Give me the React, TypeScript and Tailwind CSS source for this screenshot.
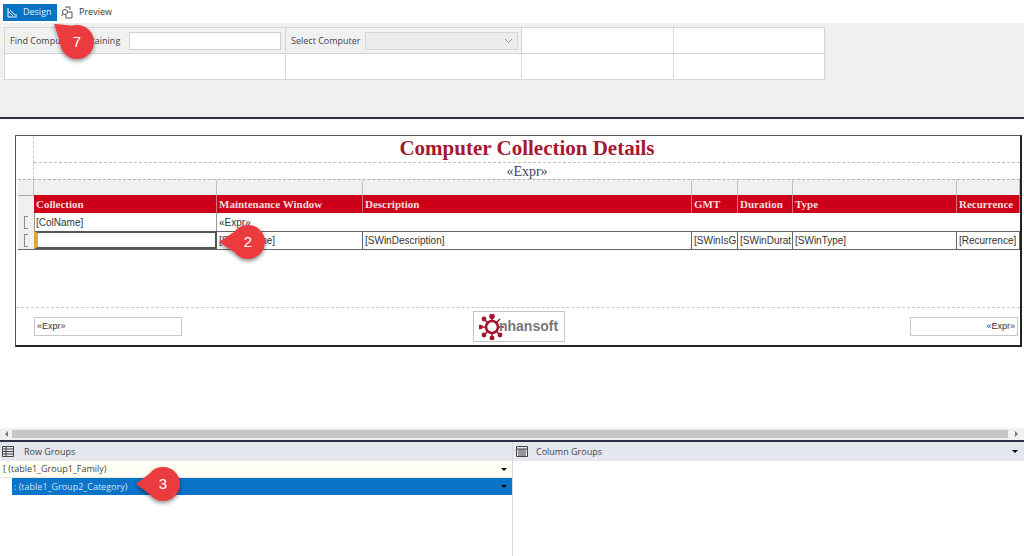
const ui = "font-['Open_Sans',sans-serif]";

function Callout({ cx, cy, tipX, tipY, label }: { cx: number; cy: number; tipX: number; tipY: number; label: string }) {
  const r = 17;
  const a = Math.atan2(tipY - cy, tipX - cx);
  const s = 0.62;
  const x1 = r * Math.cos(a - s) + 20;
  const y1 = r * Math.sin(a - s) + 20;
  const x2 = r * Math.cos(a + s) + 20;
  const y2 = r * Math.sin(a + s) + 20;
  const tx = tipX - cx + 20;
  const ty = tipY - cy + 20;
  return (
    <div className="absolute w-[40px] h-[40px]" style={{ left: cx - 20, top: cy - 20 }}>
      <svg width="40" height="40" viewBox="0 0 40 40" className="overflow-visible drop-shadow-[0_2px_2px_rgba(0,0,0,0.45)]">
        <circle cx="20" cy="20" r={r} fill="#ec3b3e" />
        <path d={`M${x1} ${y1} Q${(x1 + tx) / 2} ${(y1 + ty) / 2} ${tx} ${ty} Q${(x2 + tx) / 2} ${(y2 + ty) / 2} ${x2} ${y2} Z`} fill="#ec3b3e" />
      </svg>
      <span className="absolute inset-0 flex items-center justify-center text-white text-[15px] font-['Liberation_Sans',sans-serif]">{label}</span>
    </div>
  );
}

const cols = ["w-[183px]", "w-[146px]", "w-[329px]", "w-[46px]", "w-[55px]", "w-[164px]", "w-[63px]"];
const headers = ["Collection", "Maintenance Window", "Description", "GMT", "Duration", "Type", "Recurrence"];
const details = ["", "[SWinName]", "[SWinDescription]", "[SWinIsG", "[SWinDurat", "[SWinType]", "[Recurrence]"];

function GroupGutter() {
  return (
    <div className="w-[17px] shrink-0 bg-[#f0f0f0] border-r border-[#9a9a9a] flex items-center justify-center">
      <div className="w-[4px] h-[13px] border-l border-t border-b border-[#8a8a8a]" />
    </div>
  );
}

function Arrow() {
  return <div className="w-0 h-0 border-l-[3px] border-r-[3px] border-t-[3px] border-l-transparent border-r-transparent border-t-black" />;
}

export default function App() {
  return (
    <div className={`relative w-[1024px] h-[556px] overflow-hidden bg-white flex flex-col ${ui}`}>
      {/* Toolbar */}
      <div className="h-[23px] shrink-0 flex items-center pl-[3px] pt-[1px] text-[9px]">
        <div className="w-[54px] h-[17px] bg-[#0a74c4] flex items-center pl-[4px] gap-[5px] text-[#dfeefa]">
          <svg width="11" height="11" viewBox="0 0 11 11" fill="none" stroke="#f4f8fb" strokeWidth="1">
            <path d="M1 1v9h9M1 4l5 5M3 3l5 5h2" />
          </svg>
          <span>Design</span>
        </div>
        <div className="flex items-center pl-[4px] gap-[6px] text-[#333]">
          <svg width="12" height="13" viewBox="0 0 12 13" fill="none" stroke="#555" strokeWidth="1">
            <path d="M4 1h5v3M7 6h4v6H5V9" />
            <circle cx="4" cy="6" r="2.5" />
            <path d="M2 8l-1.5 2" />
          </svg>
          <span>Preview</span>
        </div>
      </div>

      {/* Parameters */}
      <div className="h-[94px] shrink-0 bg-[#f0f0f0] pl-[4px] pt-[4px]">
        <div className="w-[821px] h-[53px] bg-white border border-[#d6d6d6] flex text-[9px] text-[#444]">
          <div className="w-[281px] border-r border-[#d6d6d6] flex flex-col">
            <div className="h-[26px] bg-[#f0f0f0] border-b border-[#d6d6d6] flex items-center pl-[5px] pr-[4px] justify-between">
              <span>Find Computer Containing</span>
              <div className="w-[152px] h-[18px] bg-white border border-[#d0d0d0]" />
            </div>
          </div>
          <div className="w-[236px] border-r border-[#d6d6d6] flex flex-col">
            <div className="h-[26px] bg-[#f0f0f0] border-b border-[#d6d6d6] flex items-center pl-[5px] pr-[3px] justify-between">
              <span>Select Computer</span>
              <div className="w-[153px] h-[18px] bg-[#ececec] border border-[#d8d8d8] flex items-center justify-end pr-[4px]">
                <svg width="9" height="6" viewBox="0 0 9 6" fill="none" stroke="#999" strokeWidth="1"><path d="M1 1l3.5 3.5L8 1" /></svg>
              </div>
            </div>
          </div>
          <div className="w-[152px] border-r border-[#d6d6d6] flex flex-col">
            <div className="h-[26px] border-b border-[#d6d6d6]" />
          </div>
          <div className="flex-1 flex flex-col">
            <div className="h-[26px] border-b border-[#d6d6d6]" />
          </div>
        </div>
      </div>
      <div className="h-[2px] shrink-0 bg-[#2d3148]" />

      {/* Design surface */}
      <div className="h-[309px] shrink-0 pl-[15px] pt-[16px]">
        <div className="w-[1007px] h-[212px] border border-[#555] border-b-2 border-b-[#222] border-r-2 border-r-[#222] flex flex-col font-['Liberation_Sans',sans-serif]">
          {/* Title */}
          <div className="flex h-[27px] shrink-0">
            <div className="w-[18px] border-r border-dashed border-[#c8c8c8]" />
            <div className="flex-1 border-b border-dashed border-[#c0c0c0] flex items-center justify-center font-['Liberation_Serif',serif] font-bold text-[21px] text-[#a5182f]">
              Computer Collection Details
            </div>
          </div>
          <div className="flex h-[16px] shrink-0">
            <div className="w-[18px] border-r border-dashed border-[#c8c8c8]" />
            <div className="flex-1 flex items-center justify-center font-['Liberation_Serif',serif] text-[14px] text-[#3c4468]">
              «Expr»
            </div>
          </div>
          {/* Handles */}
          <div className="flex h-[16px] shrink-0 ml-[2px] bg-[#f0f0f0] border-t border-dashed border-[#b0b0b0]">
            <div className="w-[16px] border-r border-[#c0c0c0]" />
            {cols.map((c) => (
              <div key={c} className={`${c} border-r border-[#c0c0c0]`} />
            ))}
          </div>
          {/* Header */}
          <div className="flex h-[18px] shrink-0 ml-[2px]">
            <div className="w-[16px] bg-[#f0f0f0] border-t border-[#a8a8a8]" />
            {headers.map((h, i) => (
              <div key={h} className={`${cols[i]} bg-[#cc0018] text-[#f6dcdc] font-['Liberation_Serif',serif] font-bold text-[11px] pl-[2px] flex items-center border-r border-[#d9707c] whitespace-nowrap overflow-hidden`}>
                {h}
              </div>
            ))}
          </div>
          {/* ColName row */}
          <div className="flex h-[18px] shrink-0 ml-[2px] text-[10px] text-[#333]">
            <div className="w-[16px] flex justify-center bg-[#f5f5f5]"><GroupGutter /></div>
            <div className={`${cols[0]} pl-[2px] flex items-center border-r border-[#999]`}>[ColName]</div>
            <div className="flex-1 pl-[2px] flex items-center">«Expr»</div>
          </div>
          {/* Detail row */}
          <div className="flex h-[19px] shrink-0 ml-[2px] text-[10px] text-[#333] border-b border-[#666]">
            <div className="w-[16px] flex justify-center bg-[#f5f5f5]"><GroupGutter /></div>
            {details.map((d, i) => (
              <div key={i} className={
                i === 0
                  ? `${cols[0]} border-2 border-[#555] border-l-4 border-l-[#e0a83a]`
                  : `${cols[i]} pl-[2px] flex items-center border-t border-r border-[#666] whitespace-nowrap overflow-hidden`
              }>
                {d}
              </div>
            ))}
          </div>
          {/* Blank band */}
          <div className="h-[58px] shrink-0 border-b border-dashed border-[#c8c8c8]" />
          {/* Footer */}
          <div className="flex-1 flex items-center justify-between pl-[18px] pr-[2px] text-[9px] text-[#333]">
            <div className="w-[148px] h-[19px] border border-[#c8c8c8] flex items-center pl-[2px]">«Expr»</div>
            <div className="w-[92px] h-[31px] border border-[#c4c4c4] flex items-center justify-center ml-[-1px] mr-[54px]">
              <svg width="26" height="26" viewBox="0 0 26 26" stroke="#a3142e" strokeWidth="1.6" fill="#a3142e" className="mr-[-6px]">
                <path d="M13 2V24M1 13H25M5 5L21 21M21 5L5 21" />
                <circle cx="13" cy="2.5" r="2" />
                <circle cx="1.5" cy="13" r="1.5" />
                <circle cx="5" cy="5" r="1.6" />
                <circle cx="5" cy="21" r="1.6" />
                <circle cx="21" cy="21" r="1.6" />
                <circle cx="13" cy="24" r="1.6" />
                <circle cx="13" cy="13" r="6" fill="#fff" strokeWidth="2.6" />
              </svg>
              <span className="font-bold text-[14px] text-[#77777d] font-['Liberation_Sans',sans-serif]">nhansoft</span>
            </div>
            <div className="w-[108px] h-[19px] border border-[#c8c8c8] flex items-center justify-end pr-[2px]">«Expr»</div>
          </div>
        </div>
      </div>

      {/* Scrollbar */}
      <div className="h-[12px] shrink-0 bg-[#f0f0f0] flex items-center">
        <div className="w-[12px] flex justify-center">
          <div className="w-0 h-0 border-y-[3px] border-r-[3px] border-y-transparent border-r-[#777]" />
        </div>
        <div className="w-[996px] h-[8px] bg-[#c6c6c6]" />
        <div className="flex-1 flex justify-center">
          <div className="w-0 h-0 border-y-[3px] border-l-[3px] border-y-transparent border-l-[#777]" />
        </div>
      </div>
      <div className="h-[2px] shrink-0 bg-[#2d3148]" />

      {/* Groups */}
      <div className="flex-1 flex text-[9px] text-[#444]">
        <div className="w-[513px] border-r border-[#d8d8d8] flex flex-col">
          <div className="h-[19px] bg-[#e4e7ee] flex items-center pl-[2px] gap-[10px]">
            <svg width="12" height="11" viewBox="0 0 12 11" fill="none" stroke="#444" strokeWidth="1">
              <path d="M0.5 0.5h11v10h-11zM0.5 3h11M0.5 5.5h11M0.5 8h11M4 0.5v10" />
            </svg>
            <span>Row Groups</span>
          </div>
          <div className="h-[17px] bg-[#fffff6] border-b border-[#e8e8e0] flex items-center justify-between pl-[3px] pr-[5px]">
            <span>[ (table1_Group1_Family)</span>
            <div className="flex items-center"><Arrow /></div>
          </div>
          <div className="h-[17px] ml-[12px] bg-[#0a74c8] text-[#cfe4f6] flex items-center justify-between pl-[2px] pr-[5px]">
            <span>: (table1_Group2_Category)</span>
            <Arrow />
          </div>
        </div>
        <div className="flex-1">
          <div className="h-[19px] bg-[#e4e7ee] flex items-center justify-between pl-[3px] pr-[6px]">
            <div className="flex items-center gap-[8px]">
              <svg width="12" height="11" viewBox="0 0 12 11" fill="none" stroke="#444" strokeWidth="1">
                <path d="M0.5 0.5h11v10h-11zM0.5 3h11M3 3v7.5M5 3v7.5M7 3v7.5M9 3v7.5" />
              </svg>
              <span>Column Groups</span>
            </div>
            <Arrow />
          </div>
        </div>
      </div>

      <Callout cx={77} cy={42} tipX={54} tipY={24} label="7" />
      <Callout cx={248} cy={242} tipX={219} tipY={242} label="2" />
      <Callout cx={163} cy={484} tipX={136} tipY={484} label="3" />
    </div>
  );
}
